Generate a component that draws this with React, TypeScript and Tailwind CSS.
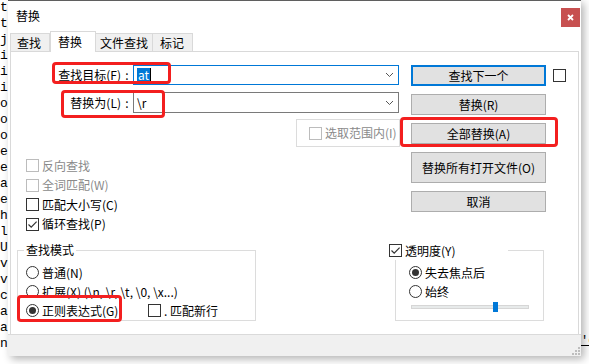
import type { ReactNode } from "react";

const FONT = "font-['Noto_Sans_CJK_SC','Microsoft_YaHei',sans-serif]";

// editor text that peeks out from behind the dialog
const EDITOR_LINES = ["t", "t", "j", "i", "i", "i", "o", "o", "o", "e", "e", "a", "e", "h", "l", "U", "v", "v", "c", "a", "a", "n"];

function Check({ checked = false, disabled = false }: { checked?: boolean; disabled?: boolean }) {
  return (
    <span
      className={`flex h-[13px] w-[13px] shrink-0 items-center justify-center border bg-white ${
        disabled ? "border-[#bcbcbc]" : "border-[#333333]"
      }`}
    >
      {checked && (
        <svg width="11" height="11" viewBox="0 0 11 11" fill="none">
          <path d="M1.5 5.5 L4.2 8.2 L9.6 2.6" stroke="#333333" strokeWidth="1.2" />
        </svg>
      )}
    </span>
  );
}

function CheckRow({ label, checked, disabled }: { label: string; checked?: boolean; disabled?: boolean }) {
  return (
    <div className="flex h-[19.5px] items-center gap-[3px]">
      <Check checked={checked} disabled={disabled} />
      <span className={`leading-[16px] ${disabled ? "text-[#8a8a8a]" : ""}`}>{label}</span>
    </div>
  );
}

function Radio({ label, checked = false }: { label: string; checked?: boolean }) {
  return (
    <div className="flex h-[19px] items-center gap-[3px]">
      <span className="flex h-[13px] w-[13px] shrink-0 items-center justify-center rounded-full border border-[#333333] bg-white">
        {checked && <span className="h-[7px] w-[7px] rounded-full bg-[#333333]" />}
      </span>
      <span className="leading-[16px]">{label}</span>
    </div>
  );
}

function Btn({ children, primary, tall }: { children: ReactNode; primary?: boolean; tall?: boolean }) {
  return (
    <div
      className={`flex w-[135px] items-center justify-center bg-[#e1e1e1] leading-[16px] ${
        tall ? "h-[31px]" : "h-[21px]"
      } ${primary ? "border-2 border-[#0078d7]" : "border border-[#adadad]"}`}
    >
      {children}
    </div>
  );
}

function Chevron() {
  return (
    <svg width="9" height="6" viewBox="0 0 9 6" fill="none" className="mr-[4px]">
      <path d="M1 1 L4.5 4.5 L8 1" stroke="#555555" strokeWidth="1" />
    </svg>
  );
}

function FieldLabel({ text }: { text: string }) {
  return (
    <>
      <span className="w-[110px] text-right leading-[16px]">{text}</span>
      <span className="w-[12px] text-center leading-[16px]">:</span>
    </>
  );
}

function RedBox({ className }: { className: string }) {
  return <div className={`pointer-events-none absolute rounded-[4px] border-[3px] border-[#f31f1f] ${className}`} />;
}

export default function App() {
  return (
    <div className={`relative h-[364px] w-[589px] overflow-hidden bg-white text-[12px] text-black ${FONT}`}>
      {/* editor behind */}
      <div className="absolute left-0 top-0 flex flex-col font-['Liberation_Mono',monospace] text-[13px] leading-[16px]">
        {EDITOR_LINES.map((c, i) => (
          <span key={i}>{c}</span>
        ))}
      </div>
      <span className="absolute left-[581px] top-[333px] font-['Liberation_Mono',monospace] text-[12px] leading-[16px] underline">
        'c
      </span>

      {/* dialog */}
      <div className="absolute left-[8px] top-0 flex h-[356px] w-[573px] flex-col border-t border-[#5f5f5f] bg-white shadow-[3px_3px_8px_rgba(0,0,0,0.3)]">
        {/* title bar */}
        <div className="flex h-[30px] items-start justify-between">
          <span className="pl-[8px] pt-[7px] text-[12px] leading-[16px]">替换</span>
          <div className="mr-px mt-[7px] flex h-[19px] w-[19px] items-center justify-center bg-[#c75050]">
            <svg width="7" height="7" viewBox="0 0 7 7">
              <path d="M1 1 L6 6 M6 1 L1 6" stroke="#ffffff" strokeWidth="1.8" />
            </svg>
          </div>
        </div>

        {/* tabs */}
        <div className="flex h-[20px] items-end pl-[2px]">
          <div className="flex h-[18px] w-[40px] items-center border border-b-0 border-[#d9d9d9] bg-[#f0f0f0] pl-[6px] leading-[16px]">查找</div>
          <div className="relative z-10 -mb-px flex h-[21px] w-[46px] items-center border border-b-0 border-[#d9d9d9] bg-white pb-[1px] pl-[7px] leading-[16px]">
            替换
          </div>
          <div className="flex h-[18px] w-[57px] items-center border border-b-0 border-l-0 border-[#d9d9d9] bg-[#f0f0f0] pl-[4px] leading-[16px]">
            文件查找
          </div>
          <div className="flex h-[18px] w-[40px] items-center border border-b-0 border-l-0 border-[#d9d9d9] bg-[#f0f0f0] pl-[7px] leading-[16px]">
            标记
          </div>
        </div>

        {/* tab panel */}
        <div className="ml-[2px] flex h-[283px] w-[569px] flex-col border border-b-0 border-[#d9d9d9] bg-white">
          <div className="flex items-start pt-[13px]">
            {/* left column */}
            <div className="flex w-[388px] flex-col">
              <div className="flex h-[20px] items-center">
                <FieldLabel text="查找目标(F)" />
                <div className="flex h-[20px] w-[266px] items-center justify-between border border-[#0078d7] bg-white">
                  <span className="ml-[3px] flex items-center">
                    <span className="bg-[#0078d7] px-px leading-[14px] text-white">at</span>
                    <span className="h-[14px] w-px bg-black" />
                  </span>
                  <Chevron />
                </div>
              </div>
              <div className="mt-[7px] flex h-[21px] items-center">
                <FieldLabel text="替换为(L)" />
                <div className="flex h-[21px] w-[266px] items-center justify-between border border-[#7a7a7a] bg-white">
                  <span className="ml-[3px] leading-[16px]">\r</span>
                  <Chevron />
                </div>
              </div>
              <div className="ml-[285px] mt-[6px] flex h-[28px] w-[104px] items-center gap-[3px] border border-[#dcdcdc] pl-[12px]">
                <Check disabled />
                <span className="leading-[16px] text-[#8a8a8a]">选取范围内(I)</span>
              </div>
              <div className="mt-[9px] flex flex-col pl-[15px]">
                <CheckRow label="反向查找" disabled />
                <CheckRow label="全词匹配(W)" disabled />
                <CheckRow label="匹配大小写(C)" />
                <CheckRow label="循环查找(P)" checked />
              </div>
            </div>

            {/* buttons */}
            <div className="ml-[12px] flex flex-col gap-[8px]">
              <Btn primary>查找下一个</Btn>
              <Btn>替换(R)</Btn>
              <Btn>全部替换(A)</Btn>
              <Btn tall>替换所有打开文件(O)</Btn>
              <Btn>取消</Btn>
            </div>
            <div className="ml-[7px] mt-[4px]">
              <Check />
            </div>
          </div>

          {/* group boxes */}
          <div className="mt-[16px] flex">
            <div className="relative ml-[6px] h-[71px] w-[239px] border border-[#dcdcdc] pl-[8px] pt-[12px]">
              <span className="absolute left-[6px] top-[-9px] bg-white px-[2px] leading-[16px]">查找模式</span>
              <Radio label="普通(N)" />
              <Radio label={"扩展(X) (\\n, \\r, \\t, \\0, \\x...)"} />
              <div className="flex items-center">
                <div className="w-[122px]">
                  <Radio label="正则表达式(G)" checked />
                </div>
                <div className="flex items-center gap-[3px]">
                  <Check />
                  <span className="leading-[16px]">. 匹配新行</span>
                </div>
              </div>
            </div>

            <div className="relative ml-[139px] h-[71px] w-[149px] border border-[#dcdcdc] pl-[13px] pt-[12px]">
              <div className="absolute left-[-7px] top-[-10px] flex h-[19px] w-[119px] items-center gap-[3px] bg-white">
                <Check checked />
                <span className="leading-[16px]">透明度(Y)</span>
              </div>
              <Radio label="失去焦点后" checked />
              <Radio label="始终" />
              <div className="ml-[2px] mt-px flex h-[10px] items-center">
                <div className="relative h-[4px] w-[118px] border border-[#d6d6d6] bg-[#e7eaea]">
                  <span className="absolute left-[81px] top-[-4px] h-[10px] w-[5px] bg-[#0078d7]" />
                </div>
              </div>
            </div>
          </div>
        </div>

        {/* status strip */}
        <div className="relative h-[22px] border-t border-[#dadada] bg-[#f0f0f0]">
          <svg width="8" height="8" viewBox="0 0 8 8" className="absolute bottom-px right-px">
            <rect x="6" y="0" width="2" height="2" fill="#bdbdbd" />
            <rect x="3" y="3" width="2" height="2" fill="#bdbdbd" />
            <rect x="6" y="3" width="2" height="2" fill="#bdbdbd" />
            <rect x="0" y="6" width="2" height="2" fill="#bdbdbd" />
            <rect x="3" y="6" width="2" height="2" fill="#bdbdbd" />
            <rect x="6" y="6" width="2" height="2" fill="#bdbdbd" />
          </svg>
        </div>
      </div>

      {/* red annotation boxes */}
      <RedBox className="left-[52px] top-[62px] h-[22px] w-[119px]" />
      <RedBox className="left-[61px] top-[90px] h-[28px] w-[104px]" />
      <RedBox className="left-[400px] top-[117px] h-[30px] w-[158px]" />
      <RedBox className="left-[17px] top-[295px] h-[27px] w-[105px]" />
    </div>
  );
}
